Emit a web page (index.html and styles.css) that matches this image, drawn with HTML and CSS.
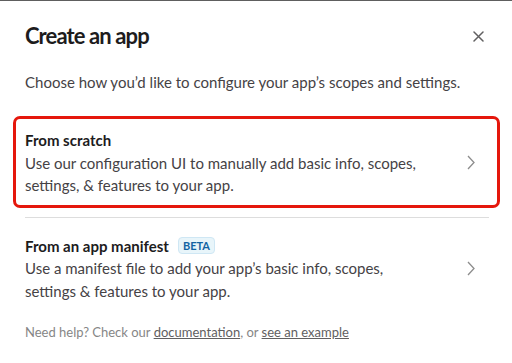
FILE: index.html
```html
<!DOCTYPE html>
<html lang="en">
<head>
<meta charset="utf-8">
<title>Create an app</title>
<link rel="stylesheet" href="styles.css">
</head>
<body>
<div class="modal">
  <header class="modal-header">
    <h1 class="modal-title">Create an app</h1>
    <button class="close-btn" aria-label="Close">
      <svg width="11" height="11" viewBox="0 0 11 11"><path d="M1 1 L10 10 M10 1 L1 10" stroke="#616061" stroke-width="1.5" fill="none" stroke-linecap="round"/></svg>
    </button>
  </header>
  <p class="intro">Choose how you’d like to configure your app’s scopes and settings.</p>
  <div class="options">
    <a class="option option-selected" href="#">
      <div class="option-body">
        <div class="option-title">From scratch</div>
        <div class="option-desc">Use our configuration UI to manually add basic info, scopes, settings, &amp; features to your app.</div>
      </div>
      <svg class="chevron" width="8" height="15" viewBox="0 0 8 15"><path d="M1 1 L7 7.5 L1 14" stroke="#8d8d8d" stroke-width="1.3" fill="none"/></svg>
    </a>
    <hr class="divider">
    <a class="option" href="#">
      <div class="option-body">
        <div class="option-title">From an app manifest <span class="badge">BETA</span></div>
        <div class="option-desc">Use a manifest file to add your app’s basic info, scopes, settings &amp; features to your app.</div>
      </div>
      <svg class="chevron" width="8" height="15" viewBox="0 0 8 15"><path d="M1 1 L7 7.5 L1 14" stroke="#8d8d8d" stroke-width="1.3" fill="none"/></svg>
    </a>
  </div>
  <p class="help">Need help? Check our <a href="#">documentation</a>, or <a href="#">see an example</a></p>
</div>
</body>
</html>
```
FILE: styles.css
```css
html, body {
  margin: 0;
  padding: 0;
  background: #ffffff;
}
body {
  font-family: Lato, "Noto Sans", sans-serif;
  color: #1d1c1d;
  border-top: 1px solid #5e5e5e;
}
.modal {
  width: 512px;
}
.modal-header {
  display: flex;
  align-items: center;
  justify-content: space-between;
  padding: 21px 28px 0 25px;
}
.modal-title {
  margin: 0;
  font-size: 22px;
  line-height: 28px;
  font-weight: 700;
  letter-spacing: -0.9px;
  color: #1d1c1d;
}
.close-btn {
  border: 0;
  background: none;
  padding: 0;
  width: 11px;
  height: 11px;
  display: flex;
}
.intro {
  margin: 21px 0 0 25px;
  font-size: 15px;
  line-height: 22px;
  color: #454245;
}
.options {
  margin-top: 23px;
}
.option {
  display: flex;
  align-items: center;
  margin: 0 12px 0 13px;
  padding: 10px 22px 8px 9px;
  border: 3px solid transparent;
  border-radius: 7px;
  text-decoration: none;
  color: inherit;
}
.option-selected {
  border-color: #e5170c;
}
.option-body {
  flex: 1;
}
.option-title {
  font-size: 15px;
  line-height: 22.5px;
  font-weight: 700;
  color: #1d1c1d;
  display: flex;
  align-items: center;
}
.option-desc {
  font-size: 15px;
  line-height: 22.5px;
  color: #454245;
  padding-right: 40px;
}
.chevron {
  flex: none;
}
.badge {
  display: inline-block;
  margin-left: 9px;
  padding: 0 4px;
  height: 15px;
  line-height: 15px;
  font-size: 11px;
  font-weight: 700;
  color: #1264a3;
  background: #e8f5fa;
  border: 1px solid #cfe7f4;
  border-radius: 4px;
}
.divider {
  border: 0;
  border-top: 1px solid #dddddd;
  margin: 9px 23px 4px 25px;
}
.help {
  margin: 10px 0 0 25px;
  font-size: 13px;
  line-height: 18px;
  color: #868686;
}
.help a {
  color: #616061;
  text-decoration: underline;
}
```
